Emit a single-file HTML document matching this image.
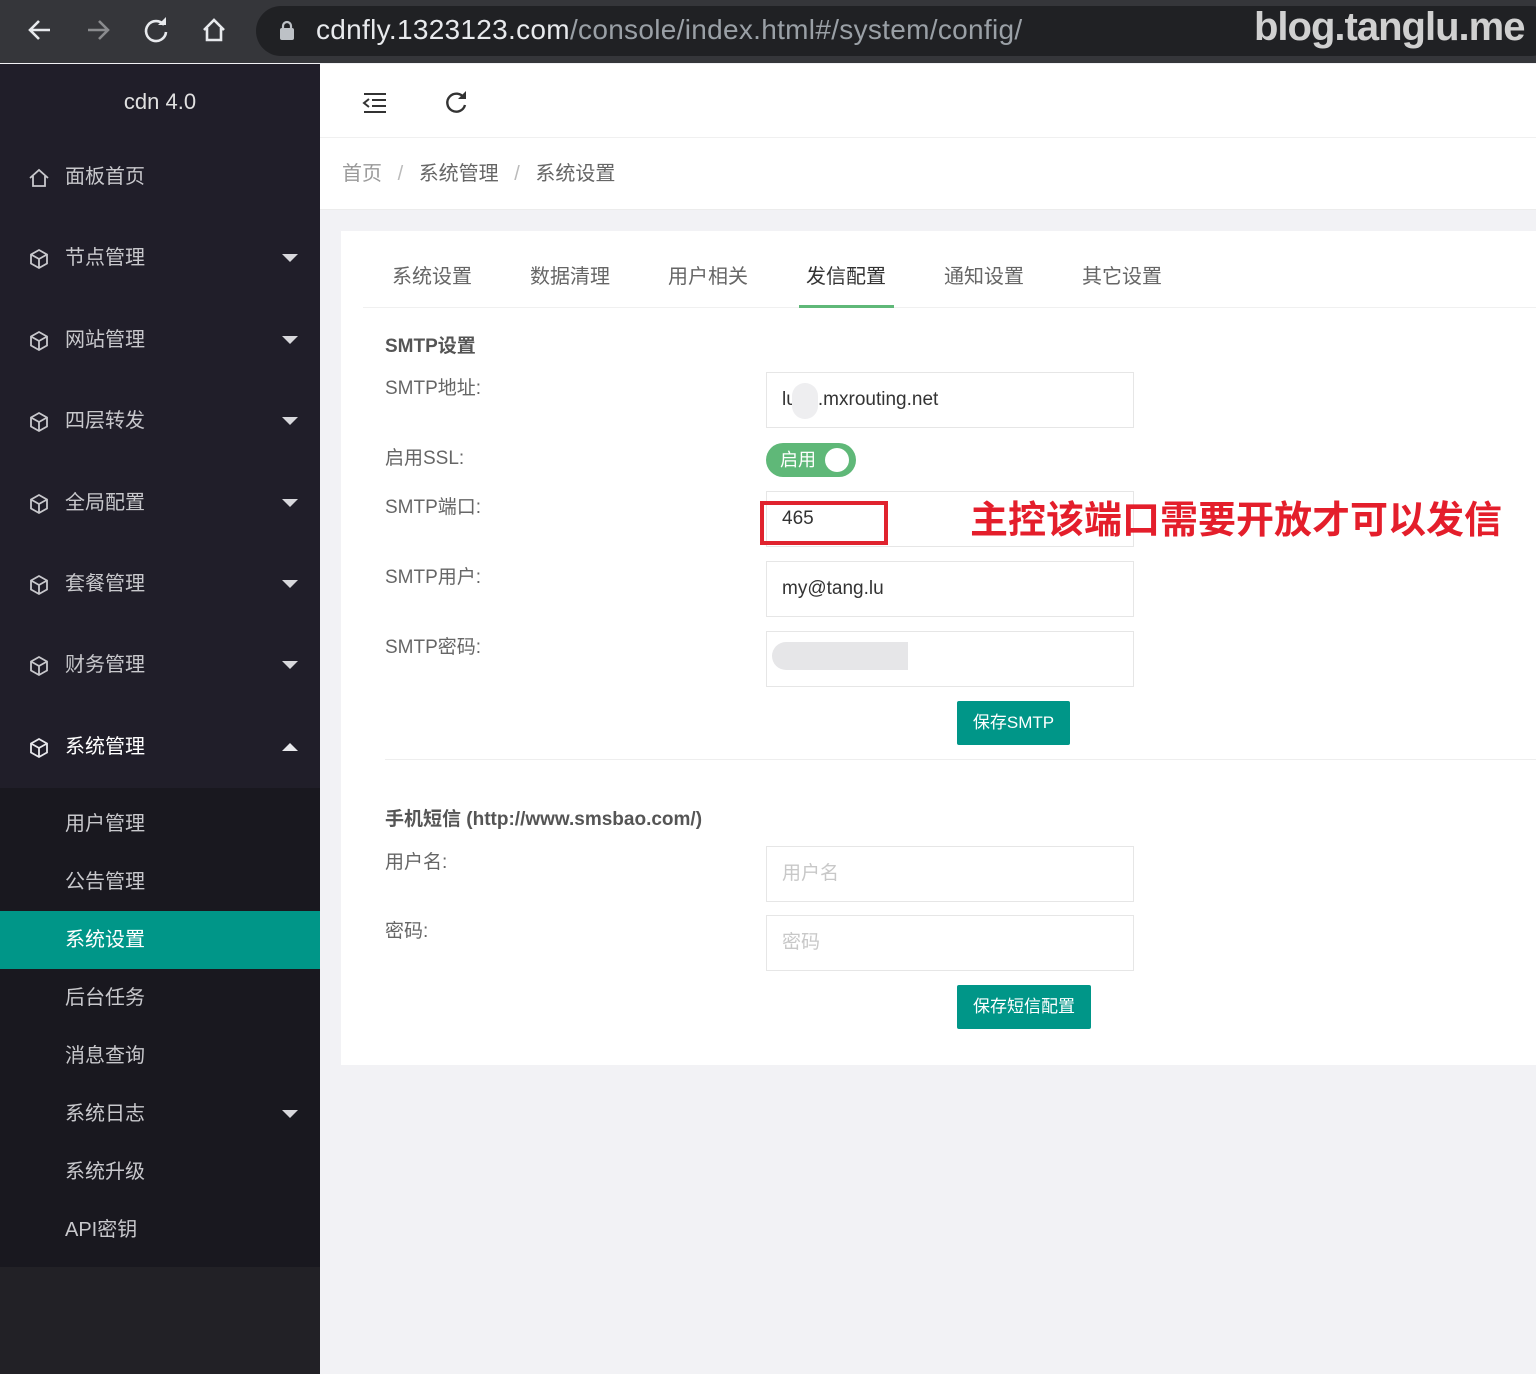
<!DOCTYPE html>
<html><head><meta charset="utf-8"><style>
*{margin:0;padding:0;box-sizing:border-box}
body{width:1536px;height:1374px;overflow:hidden;position:relative;background:#f2f2f5;font-family:"Liberation Sans","Noto Sans CJK SC",sans-serif}
.a{position:absolute}
.top{left:0;top:0;width:1536px;height:63px;background:#35363a}
.url{left:256px;top:6px;width:1300px;height:50px;border-radius:25px;background:#202124}
.sb{left:0;top:64px;width:320px;height:1310px;background:#222126}
.sbm{left:0;top:64px;width:320px;height:724px;background:#201e29}
.sub{left:0;top:788px;width:320px;height:479px;background:#19181f}
.mi{left:0;width:320px;height:40px;color:#c8c8cc;font-size:20px;line-height:40px}
.mi span{position:absolute;left:65px}
.mi svg{position:absolute;left:28px;top:10px}
.tri{position:absolute;left:282px;top:16px;width:0;height:0;border-left:8px solid transparent;border-right:8px solid transparent;border-top:8px solid #d8d8dc}
.triu{border-top:none;border-bottom:8px solid #e8e8ec}
.lbl{font-size:19px;color:#666}
.inp{left:766px;width:368px;height:56px;border:1px solid #e6e6e6;background:#fff;font-size:19px;color:#333;line-height:54px;padding-left:15px}
.btn{background:#009688;color:#fff;font-size:17px;height:44px;line-height:44px;text-align:center;border-radius:2px}
</style></head><body>
<div class="a top"></div>
<div class="a url"></div>
<svg class="a" style="left:26px;top:16px" width="28" height="28" viewBox="0 0 28 28"><path d="M24 14H5M13 5l-9 9 9 9" stroke="#e8eaed" stroke-width="2.6" fill="none"/></svg>
<svg class="a" style="left:84px;top:16px" width="28" height="28" viewBox="0 0 28 28"><path d="M4 14h19M15 5l9 9-9 9" stroke="#8a8b8e" stroke-width="2.6" fill="none"/></svg>
<svg class="a" style="left:142px;top:16px" width="28" height="28" viewBox="0 0 28 28"><path d="M22 9A10 10 0 1 0 24 16" stroke="#e8eaed" stroke-width="2.6" fill="none"/><path d="M16 9h8V1z" fill="#e8eaed"/></svg>
<svg class="a" style="left:200px;top:16px" width="28" height="28" viewBox="0 0 28 28"><path d="M4 14L14 4l10 10M7 12v12h14V12" stroke="#e8eaed" stroke-width="2.6" fill="none"/></svg>
<svg class="a" style="left:279px;top:20px" width="16" height="20" viewBox="0 0 16 20"><rect x="1" y="8" width="14" height="12" rx="2" fill="#bdc1c6"/><path d="M4 9V6a4 4 0 0 1 8 0v3" stroke="#bdc1c6" stroke-width="2.2" fill="none"/></svg>
<div class="a" style="left:316px;top:12px;font-size:28px;color:#e8eaed;line-height:36px;letter-spacing:0.3px">cdnfly.1323123.com<span style="color:#9aa0a6">/console/index.html#/system/config/</span></div>
<div class="a" style="left:1254px;top:4px;font-size:40px;font-weight:bold;color:#d0d0d0;line-height:46px;letter-spacing:-1px">blog.tanglu.me</div>

<div class="a sb"></div><div class="a sbm"></div><div class="a sub"></div>
<div class="a" style="left:0;top:82px;width:320px;text-align:center;color:#e0e0e0;font-size:22px;line-height:40px">cdn 4.0</div>

<div class="a mi" style="top:157px"><svg width="22" height="22" viewBox="0 0 22 22"><path d="M2 11L11 3l9 8M5 9v10h12V9" stroke="#c8c8cc" stroke-width="1.8" fill="none"/></svg><span>面板首页</span></div>
<div class="a mi" style="top:238px"><svg width="22" height="22" viewBox="0 0 22 22"><path d="M11 2l8 4.5v9L11 20l-8-4.5v-9zM3 6.5l8 4.5 8-4.5M11 11v9" stroke="#c8c8cc" stroke-width="1.8" fill="none"/></svg><span>节点管理</span><i class="tri"></i></div>
<div class="a mi" style="top:320px"><svg width="22" height="22" viewBox="0 0 22 22"><path d="M11 2l8 4.5v9L11 20l-8-4.5v-9zM3 6.5l8 4.5 8-4.5M11 11v9" stroke="#c8c8cc" stroke-width="1.8" fill="none"/></svg><span>网站管理</span><i class="tri"></i></div>
<div class="a mi" style="top:401px"><svg width="22" height="22" viewBox="0 0 22 22"><path d="M11 2l8 4.5v9L11 20l-8-4.5v-9zM3 6.5l8 4.5 8-4.5M11 11v9" stroke="#c8c8cc" stroke-width="1.8" fill="none"/></svg><span>四层转发</span><i class="tri"></i></div>
<div class="a mi" style="top:483px"><svg width="22" height="22" viewBox="0 0 22 22"><path d="M11 2l8 4.5v9L11 20l-8-4.5v-9zM3 6.5l8 4.5 8-4.5M11 11v9" stroke="#c8c8cc" stroke-width="1.8" fill="none"/></svg><span>全局配置</span><i class="tri"></i></div>
<div class="a mi" style="top:564px"><svg width="22" height="22" viewBox="0 0 22 22"><path d="M11 2l8 4.5v9L11 20l-8-4.5v-9zM3 6.5l8 4.5 8-4.5M11 11v9" stroke="#c8c8cc" stroke-width="1.8" fill="none"/></svg><span>套餐管理</span><i class="tri"></i></div>
<div class="a mi" style="top:645px"><svg width="22" height="22" viewBox="0 0 22 22"><path d="M11 2l8 4.5v9L11 20l-8-4.5v-9zM3 6.5l8 4.5 8-4.5M11 11v9" stroke="#c8c8cc" stroke-width="1.8" fill="none"/></svg><span>财务管理</span><i class="tri"></i></div>
<div class="a mi" style="top:727px;color:#fff"><svg width="22" height="22" viewBox="0 0 22 22"><path d="M11 2l8 4.5v9L11 20l-8-4.5v-9zM3 6.5l8 4.5 8-4.5M11 11v9" stroke="#e8e8ec" stroke-width="1.8" fill="none"/></svg><span>系统管理</span><i class="tri triu"></i></div>

<div class="a mi" style="top:804px"><span>用户管理</span></div>
<div class="a mi" style="top:862px"><span>公告管理</span></div>
<div class="a" style="left:0;top:911px;width:320px;height:58px;background:#009688"></div>
<div class="a mi" style="top:920px;color:#fff"><span>系统设置</span></div>
<div class="a mi" style="top:978px"><span>后台任务</span></div>
<div class="a mi" style="top:1036px"><span>消息查询</span></div>
<div class="a mi" style="top:1094px"><span>系统日志</span><i class="tri"></i></div>
<div class="a mi" style="top:1152px"><span>系统升级</span></div>
<div class="a mi" style="top:1210px"><span>API密钥</span></div>

<div class="a" style="left:320px;top:64px;width:1216px;height:146px;background:#fff;border-bottom:1px solid #ececec"></div>
<div class="a" style="left:320px;top:137px;width:1216px;height:1px;background:#f0f0f0"></div>
<svg class="a" style="left:362px;top:90px" width="26" height="26" viewBox="0 0 26 26"><path d="M2 4h22M10 10h14M10 16h14M2 22h22M7 9l-5 4 5 4" stroke="#333" stroke-width="2" fill="none"/></svg>
<svg class="a" style="left:443px;top:90px" width="26" height="26" viewBox="0 0 26 26"><path d="M21 8A9 9 0 1 0 22 15" stroke="#333" stroke-width="2.4" fill="none"/><path d="M15 9h8V1z" fill="#333"/></svg>
<div class="a" style="left:342px;top:160px;font-size:20px;color:#999;line-height:28px">首页 <span style="margin:0 10px;color:#bbb">/</span> <span style="color:#666">系统管理</span> <span style="margin:0 10px;color:#bbb">/</span> <span style="color:#666">系统设置</span></div>

<div class="a" style="left:341px;top:231px;width:1195px;height:834px;background:#fff"></div>
<div class="a" style="left:363px;top:307px;width:1173px;height:1px;background:#f0f0f0"></div>
<div class="a" style="left:392px;top:263px;font-size:20px;color:#666;line-height:28px">
<span style="position:absolute;left:0;width:90px">系统设置</span><span style="position:absolute;left:138px;width:90px">数据清理</span><span style="position:absolute;left:276px;width:90px">用户相关</span><span style="position:absolute;left:414px;width:90px;color:#333">发信配置</span><span style="position:absolute;left:552px;width:90px">通知设置</span><span style="position:absolute;left:690px;width:90px">其它设置</span></div>
<div class="a" style="left:799px;top:305px;width:95px;height:3px;background:#5fb878"></div>

<div class="a" style="left:385px;top:333px;font-size:19px;font-weight:bold;color:#555;line-height:28px">SMTP设置</div>
<div class="a lbl" style="left:385px;top:375px;line-height:28px">SMTP地址:</div>
<div class="a inp" style="top:372px">lu&nbsp;&nbsp;&nbsp;&nbsp;.mxrouting.net</div>
<div class="a" style="left:792px;top:383px;width:26px;height:36px;border-radius:13px;background:#eeeef0"></div>
<div class="a lbl" style="left:385px;top:445px;line-height:28px">启用SSL:</div>
<div class="a" style="left:766px;top:443px;width:90px;height:34px;border-radius:17px;background:#5fb878"></div>
<div class="a" style="left:780px;top:447px;color:#fff;font-size:18px;line-height:26px">启用</div>
<div class="a" style="left:825px;top:448px;width:24px;height:24px;border-radius:12px;background:#fff"></div>
<div class="a lbl" style="left:385px;top:494px;line-height:28px">SMTP端口:</div>
<div class="a inp" style="top:491px">465</div>
<div class="a" style="left:760px;top:501px;width:128px;height:44px;border:4px solid #e0232e"></div>
<div class="a" style="left:970px;top:496px;font-size:38px;font-weight:bold;color:#e41e2b;line-height:50px;letter-spacing:0">主控该端口需要开放才可以发信</div>
<div class="a lbl" style="left:385px;top:564px;line-height:28px">SMTP用户:</div>
<div class="a inp" style="top:561px">my@tang.lu</div>
<div class="a lbl" style="left:385px;top:634px;line-height:28px">SMTP密码:</div>
<div class="a inp" style="top:631px"></div>
<div class="a" style="left:772px;top:642px;width:136px;height:28px;background:#e6e6e8;border-radius:14px 0 0 14px"></div>
<div class="a btn" style="left:957px;top:701px;width:113px">保存SMTP</div>
<div class="a" style="left:385px;top:759px;width:1151px;height:1px;background:#eee"></div>

<div class="a" style="left:385px;top:806px;font-size:19px;font-weight:bold;color:#555;line-height:28px">手机短信 (http://www.smsbao.com/)</div>
<div class="a lbl" style="left:385px;top:849px;line-height:28px">用户名:</div>
<div class="a inp" style="top:846px;color:#c8c8c8">用户名</div>
<div class="a lbl" style="left:385px;top:918px;line-height:28px">密码:</div>
<div class="a inp" style="top:915px;color:#c8c8c8">密码</div>
<div class="a btn" style="left:957px;top:985px;width:134px">保存短信配置</div>
</body></html>
